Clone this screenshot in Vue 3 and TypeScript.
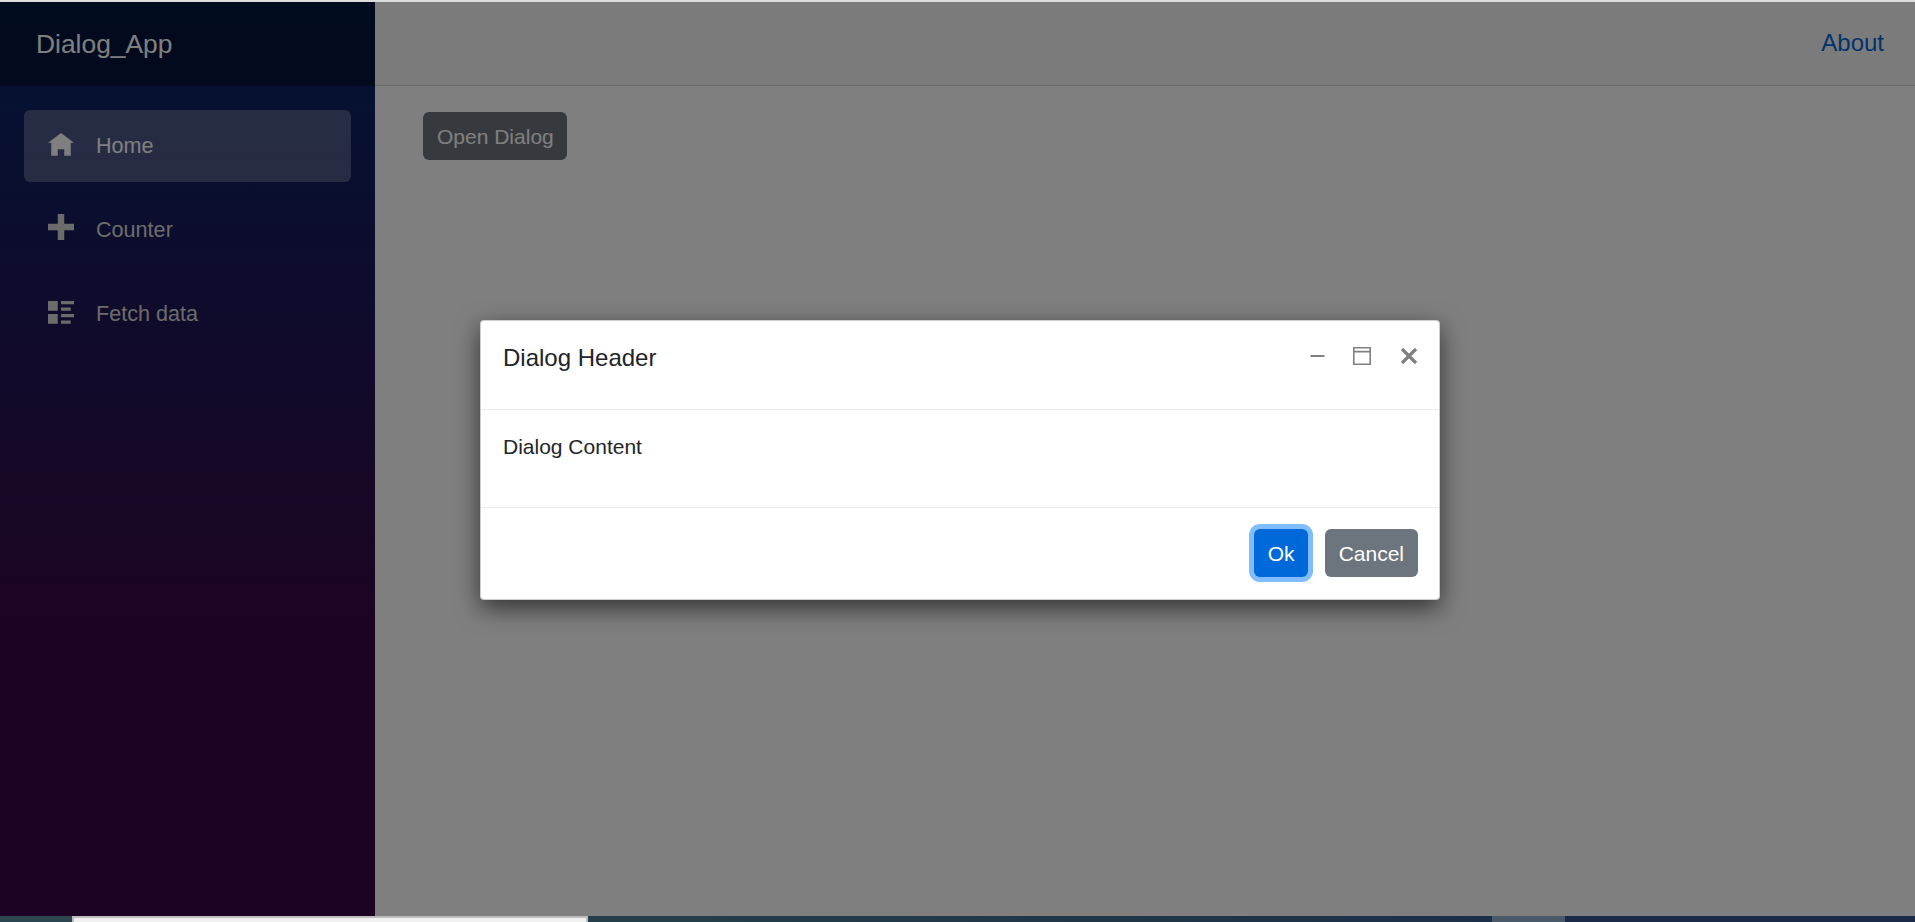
<script setup lang="ts">
interface NavItem {
  label: string
  path: string
  active?: boolean
  raised?: boolean
}
const navItems: NavItem[] = [
  { label: 'Home', active: true, path: 'M4 0l-4 3h1v4h2v-2h2v2h2v-4.03l1 .03-4-3z' },
  { label: 'Counter', raised: true, path: 'M3 0v3h-3v2h3v3h2v-3h3v-2h-3v-3h-2z' },
  { label: 'Fetch data', path: 'M0 0v3h3v-3h-3zm4 0v1h4v-1h-4zm0 2v1h3v-1h-3zm-4 2v3h3v-3h-3zm4 0v1h4v-1h-4zm0 2v1h3v-1h-3z' }
]
</script>

<template>
  <div class="screen">
    <div class="edge"></div>
    <div class="page">
      <aside class="sidebar">
        <div class="brand">Dialog_App</div>
        <nav class="nav">
          <a v-for="item in navItems" :key="item.label" class="nav-link" :class="{ active: item.active }">
            <svg class="nav-icon" :class="{ raised: item.raised }" viewBox="0 0 8 8"><path :d="item.path" /></svg>
            {{ item.label }}
          </a>
        </nav>
      </aside>
      <main class="main">
        <header class="topbar"><a class="about">About</a></header>
        <div class="content"><button class="open-btn">Open Dialog</button></div>
      </main>
      <div class="overlay">
        <section class="dialog">
          <div class="dialog-header">
            <span class="dialog-title">Dialog Header</span>
            <div class="window-icons">
              <svg class="win-icon" viewBox="0 0 18 18"><rect x="3.5" y="8" width="14" height="2" /></svg>
              <svg class="win-icon win-max" viewBox="0 0 18 18">
                <path d="M0.8 0.8h16.4v16.4h-16.4z M0.8 4.6h16.4" fill="none" stroke="#808080" stroke-width="1.6" />
              </svg>
              <svg class="win-icon" viewBox="0 0 18 18">
                <path d="M2 2L16 16M16 2L2 16" fill="none" stroke="#808080" stroke-width="3.2" />
              </svg>
            </div>
          </div>
          <div class="dialog-body">Dialog Content</div>
          <div class="dialog-footer">
            <button class="btn btn-ok">Ok</button>
            <button class="btn btn-cancel">Cancel</button>
          </div>
        </section>
      </div>
    </div>
    <div class="taskbar">
      <span class="seg seg-a"></span>
      <span class="seg seg-input"></span>
      <span class="seg seg-b"></span>
      <span class="seg seg-c"></span>
      <span class="seg seg-d"></span>
    </div>
  </div>
</template>

<style>
html, body { margin: 0; padding: 0; overflow: hidden; }
</style>

<style scoped>
.screen {
  display: flex;
  flex-direction: column;
  width: 1915px;
  height: 922px;
  font-family: "Liberation Sans", Arial, sans-serif;
  background: #fff;
  overflow: hidden;
}
.edge { height: 2px; flex: none; background: #dcdcdc; }
.page { position: relative; flex: 1; display: flex; min-height: 0; }
.sidebar {
  width: 375px;
  flex: none;
  background-image: linear-gradient(180deg, #052767 0%, #3a0647 70%);
  display: flex;
  flex-direction: column;
}
.brand {
  height: 84px;
  box-sizing: border-box;
  flex: none;
  padding-left: 36px;
  display: flex;
  align-items: center;
  font-size: 26.4px;
  color: #fff;
  background: rgba(0, 0, 0, 0.4);
}
.nav { display: flex; flex-direction: column; padding: 24px 24px 0; gap: 12px; }
.nav-link {
  display: flex;
  align-items: center;
  height: 72px;
  padding-left: 24px;
  border-radius: 6px;
  font-size: 21.6px;
  color: #d7d7d7;
}
.nav-link.active { background: rgba(255, 255, 255, 0.25); color: #fff; }
.nav-icon { width: 26px; height: 26px; margin-right: 22px; fill: currentColor; flex: none; }
.nav-icon.raised { margin-top: -6px; }
.main { flex: 1; display: flex; flex-direction: column; min-width: 0; }
.topbar {
  height: 84px;
  flex: none;
  box-sizing: border-box;
  display: flex;
  align-items: center;
  justify-content: flex-end;
  padding: 0 31px 2px 0;
  background: #f7f7f7;
  border-bottom: 1px solid #d6d5d5;
}
.about { font-size: 24px; color: #0366d6; }
.content { padding: 26px 48px; }
.open-btn {
  height: 48px;
  padding: 2px 13px 0 14px;
  font: 21px "Liberation Sans", Arial, sans-serif;
  color: #fff;
  background: #6c757d;
  border: none;
  border-radius: 6px;
}
.overlay {
  position: absolute;
  inset: 0;
  display: flex;
  align-items: center;
  justify-content: center;
  padding: 2px 0 0 5px;
  box-sizing: border-box;
  background: rgba(0, 0, 0, 0.5);
}
.dialog {
  width: 960px;
  height: 280px;
  box-sizing: border-box;
  background: #fff;
  border-radius: 4px;
  border: 1px solid rgba(0, 0, 0, 0.2);
  box-shadow: 0 8px 24px rgba(0, 0, 0, 0.6);
  display: flex;
  flex-direction: column;
  color: #212529;
}
.dialog-header {
  height: 89px;
  flex: none;
  box-sizing: border-box;
  padding: 0 21px 0 22px;
  border-bottom: 1px solid #e9ecef;
  display: flex;
  justify-content: space-between;
}
.dialog-title { font-size: 24px; margin-top: 23px; }
.window-icons { display: flex; gap: 28px; margin-top: 26px; }
.win-icon { width: 18px; height: 18px; fill: #808080; }
.win-max { margin-right: 1px; }
.dialog-body {
  height: 98px;
  flex: none;
  box-sizing: border-box;
  padding: 25px 22px 0;
  border-bottom: 1px solid #e9ecef;
  font-size: 21px;
}
.dialog-footer {
  flex: 1;
  display: flex;
  justify-content: flex-end;
  align-items: center;
  gap: 17px;
  padding: 0 21px 1px 0;
}
.btn {
  height: 48px;
  border: none;
  border-radius: 6px;
  font: 21px "Liberation Sans", Arial, sans-serif;
  color: #fff;
  padding: 2px 14px 0;
}
.btn-ok { background: #0069d9; box-shadow: 0 0 0 5px #80bdff; width: 54px; padding: 2px 0 0 1px; }
.btn-cancel { background: #6c757d; }
.taskbar { height: 6px; flex: none; display: flex; }
.seg { display: block; height: 100%; }
.seg-a { width: 72px; background: #2c4650; }
.seg-input { width: 516px; box-sizing: border-box; background: #f0f0f0; border: 2px solid #bdbdbd; border-bottom: none; }
.seg-b { width: 904px; background: linear-gradient(90deg, #243f49, #1c2f48); }
.seg-c { width: 73px; background: #4b5a6b; }
.seg-d { flex: 1; background: #1a2a48; }
</style>
